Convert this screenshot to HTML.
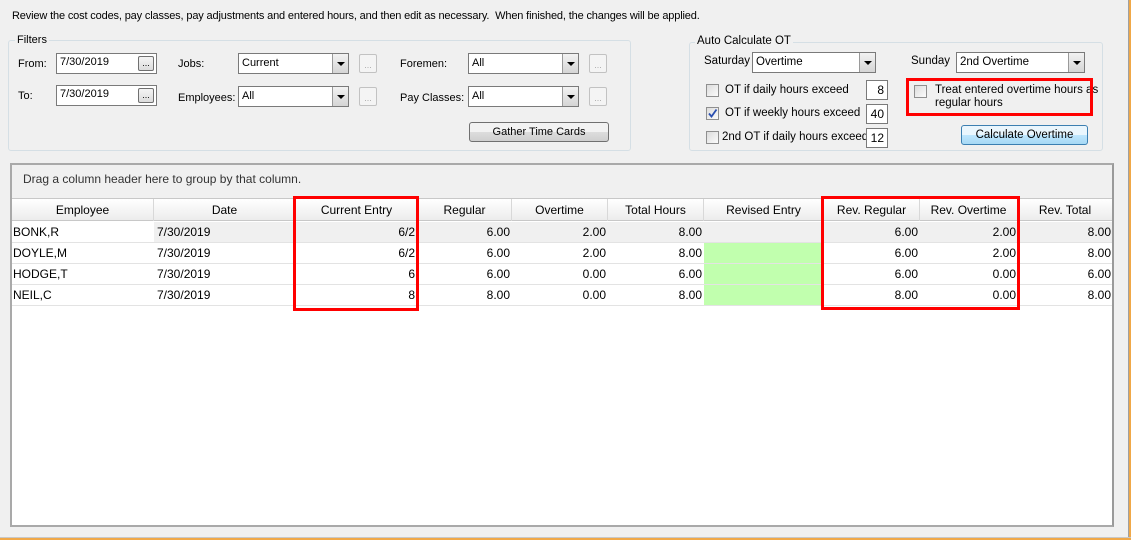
<!DOCTYPE html>
<html><head><meta charset="utf-8">
<style>
*{box-sizing:border-box;margin:0;padding:0}
body{width:1131px;height:540px;background:#f0f0f0;position:relative;overflow:hidden;font-family:"Liberation Sans",Arial,sans-serif;font-size:11px;color:#000}
.a{position:absolute;white-space:nowrap}
.fs{position:absolute;border:1px solid #d5dfe5;border-radius:3px}
.lg{position:absolute;background:#f0f0f0;padding:0 2px}
.tb{position:absolute;background:#fff;border:1px solid #7a7a7a;padding:2px 0 0 3px}
.cb{position:absolute;background:#fff;border:1px solid #7a7a7a;padding:3px 0 0 3px}
.dd{position:absolute;top:0;right:0;width:16px;height:100%;background:linear-gradient(#f2f2f2,#d5d5d5);border-left:1px solid #9a9a9a}
.dd:after{content:"";position:absolute;left:4px;top:8px;border-left:4px solid transparent;border-right:4px solid transparent;border-top:4px solid #000}
.db{position:absolute;width:18px;height:19px;border:1px solid #c2c2c2;border-radius:2px;background:#f4f4f4;color:#aaa;font-size:9px;text-align:center;line-height:20px}
.eb{position:absolute;width:16px;height:15px;border:1px solid #707070;border-radius:2px;background:linear-gradient(#f4f4f4,#dcdcdc);font-size:9px;text-align:center;line-height:13px}
.btn{position:absolute;border:1px solid #707070;border-radius:3px;background:linear-gradient(#f2f2f2 50%,#dddddd 50%,#cfcfcf);text-align:center;font-size:11px}
.chk{position:absolute;width:13px;height:13px;border:1px solid #8f8f8f;background:linear-gradient(135deg,#dcdcdc,#fbfbfb)}
.nb{position:absolute;background:#fff;border:1px solid #7a7a7a;text-align:right;padding:2px 3px 0 0;font-size:12px}
.g{font-family:"Liberation Sans",Arial,sans-serif;font-size:12px}
.o{font-size:11.5px}
.h{position:absolute;top:199px;height:22px;border-right:1px solid #d8d8d8;text-align:center;line-height:22px}
.c{position:absolute;height:21px;line-height:21px;border-bottom:1px solid #e3e3e3;padding:0 2px}
.r{text-align:right}
.red{position:absolute;border:3px solid #f00}
</style></head><body>
<div class="a" style="left:12px;top:10px;letter-spacing:-0.15px">Review the cost codes, pay classes, pay adjustments and entered hours, and then edit as necessary.&nbsp; When finished, the changes will be applied.</div>

<div class="fs" style="left:8px;top:40px;width:623px;height:111px"></div>
<div class="lg a" style="left:15px;top:34px">Filters</div>
<div class="a" style="left:18px;top:58px">From:</div>
<div class="tb" style="left:56px;top:53px;width:101px;height:21px">7/30/2019</div>
<div class="eb" style="left:138px;top:56px">...</div>
<div class="a" style="left:18px;top:90px">To:</div>
<div class="tb" style="left:56px;top:85px;width:101px;height:21px">7/30/2019</div>
<div class="eb" style="left:138px;top:88px">...</div>

<div class="a" style="left:178px;top:58px">Jobs:</div>
<div class="cb" style="left:238px;top:53px;width:111px;height:21px">Current<div class="dd"></div></div>
<div class="db" style="left:359px;top:54px">...</div>
<div class="a" style="left:178px;top:92px">Employees:</div>
<div class="cb" style="left:238px;top:86px;width:111px;height:21px">All<div class="dd"></div></div>
<div class="db" style="left:359px;top:87px">...</div>

<div class="a" style="left:400px;top:58px">Foremen:</div>
<div class="cb" style="left:468px;top:53px;width:111px;height:21px">All<div class="dd"></div></div>
<div class="db" style="left:589px;top:54px">...</div>
<div class="a" style="left:400px;top:92px">Pay Classes:</div>
<div class="cb" style="left:468px;top:86px;width:111px;height:21px">All<div class="dd"></div></div>
<div class="db" style="left:589px;top:87px">...</div>
<div class="btn" style="left:469px;top:122px;width:140px;height:20px;line-height:18px">Gather Time Cards</div>

<div class="fs" style="left:689px;top:42px;width:414px;height:109px"></div>
<div class="lg a g o" style="left:695px;top:35px">Auto Calculate OT</div>
<div class="a g o" style="left:704px;top:55px">Saturday</div>
<div class="cb g o" style="left:752px;top:52px;width:124px;height:21px">Overtime<div class="dd"></div></div>
<div class="a g o" style="left:911px;top:55px">Sunday</div>
<div class="cb g o" style="left:956px;top:52px;width:129px;height:21px">2nd Overtime<div class="dd"></div></div>

<div class="chk" style="left:706px;top:84px"></div>
<div class="a g o" style="left:725px;top:84px">OT if daily hours exceed</div>
<div class="nb" style="left:866px;top:80px;width:22px;height:20px">8</div>
<div class="chk" style="left:706px;top:107px"><svg width="11" height="11" style="position:absolute;left:0;top:0"><path d="M2 5.5 L4.5 8.5 L9.5 1.5" stroke="#2a4fb0" stroke-width="1.8" fill="none"/></svg></div>
<div class="a g o" style="left:725px;top:107px">OT if weekly hours exceed</div>
<div class="nb" style="left:866px;top:104px;width:22px;height:20px">40</div>
<div class="chk" style="left:706px;top:131px"></div>
<div class="a g o" style="left:722px;top:131px">2nd OT if daily hours exceed</div>
<div class="nb" style="left:866px;top:128px;width:22px;height:20px">12</div>

<div class="chk" style="left:914px;top:85px"></div>
<div class="a g o" style="left:935px;top:84px;line-height:13px">Treat entered overtime hours as<br>regular hours</div>
<div class="red" style="left:906px;top:78px;width:187px;height:38px"></div>
<div class="btn g o" style="left:961px;top:125px;width:127px;height:20px;line-height:18px;border-color:#3c7fb1;background:linear-gradient(#eaf6fd 50%,#bee6fd 50%,#a7d9f5)">Calculate Overtime</div>

<div style="position:absolute;left:10px;top:163px;width:1104px;height:364px;border:2px solid #a9a9a9;border-right-color:#9a9a9a;background:#fff"></div>
<div style="position:absolute;left:12px;top:165px;width:1100px;height:34px;background:#f0f0f0;border-bottom:1px solid #c8c8c8"></div>
<div class="a g" style="left:23px;top:172px;color:#333;font-size:12px">Drag a column header here to group by that column.</div>
<div style="position:absolute;left:12px;top:199px;width:1100px;height:22px;background:linear-gradient(#fff,#ececec);border-bottom:1px solid #c8c8c8"></div>
<div class="g">
<div class="h" style="left:12px;width:142px">Employee</div>
<div class="h" style="left:154px;width:142px">Date</div>
<div class="h" style="left:296px;width:122px">Current Entry</div>
<div class="h" style="left:418px;width:94px">Regular</div>
<div class="h" style="left:512px;width:96px">Overtime</div>
<div class="h" style="left:608px;width:96px">Total Hours</div>
<div class="h" style="left:704px;width:120px">Revised Entry</div>
<div class="h" style="left:824px;width:96px">Rev. Regular</div>
<div class="h" style="left:920px;width:98px">Rev. Overtime</div>
<div class="h" style="left:1018px;width:94px;border-right:none">Rev. Total</div>
</div>
<div style="position:absolute;left:154px;top:222px;width:958px;height:21px;background:#f0f0f0"></div>
<div style="position:absolute;left:704px;top:243px;width:120px;height:63px;background:#c1ffae"></div>

<div class="g">
<div class="c" style="left:12px;top:222px;width:1100px"></div>
<div class="c" style="left:12px;top:243px;width:1100px"></div>
<div class="c" style="left:12px;top:264px;width:1100px"></div>
<div class="c" style="left:12px;top:285px;width:1100px"></div>

<div class="a" style="left:13px;top:225px">BONK,R</div>
<div class="a" style="left:13px;top:246px">DOYLE,M</div>
<div class="a" style="left:13px;top:267px">HODGE,T</div>
<div class="a" style="left:13px;top:288px">NEIL,C</div>
<div class="a" style="left:157px;top:225px">7/30/2019</div>
<div class="a" style="left:157px;top:246px">7/30/2019</div>
<div class="a" style="left:157px;top:267px">7/30/2019</div>
<div class="a" style="left:157px;top:288px">7/30/2019</div>

<div class="a r" style="right:716px;top:225px">6/2</div>
<div class="a r" style="right:716px;top:246px">6/2</div>
<div class="a r" style="right:716px;top:267px">6</div>
<div class="a r" style="right:716px;top:288px">8</div>
<div class="a" style="right:621px;top:225px">6.00</div>
<div class="a" style="right:621px;top:246px">6.00</div>
<div class="a" style="right:621px;top:267px">6.00</div>
<div class="a" style="right:621px;top:288px">8.00</div>
<div class="a" style="right:525px;top:225px">2.00</div>
<div class="a" style="right:525px;top:246px">2.00</div>
<div class="a" style="right:525px;top:267px">0.00</div>
<div class="a" style="right:525px;top:288px">0.00</div>
<div class="a" style="right:429px;top:225px">8.00</div>
<div class="a" style="right:429px;top:246px">8.00</div>
<div class="a" style="right:429px;top:267px">6.00</div>
<div class="a" style="right:429px;top:288px">8.00</div>
<div class="a" style="right:213px;top:225px">6.00</div>
<div class="a" style="right:213px;top:246px">6.00</div>
<div class="a" style="right:213px;top:267px">6.00</div>
<div class="a" style="right:213px;top:288px">8.00</div>
<div class="a" style="right:115px;top:225px">2.00</div>
<div class="a" style="right:115px;top:246px">2.00</div>
<div class="a" style="right:115px;top:267px">0.00</div>
<div class="a" style="right:115px;top:288px">0.00</div>
<div class="a" style="right:20px;top:225px">8.00</div>
<div class="a" style="right:20px;top:246px">8.00</div>
<div class="a" style="right:20px;top:267px">6.00</div>
<div class="a" style="right:20px;top:288px">8.00</div>
</div>

<div class="red" style="left:293px;top:196px;width:126px;height:115px"></div>
<div class="red" style="left:821px;top:196px;width:199px;height:114px"></div>

<div style="position:absolute;left:1128px;top:0;width:1px;height:540px;background:#a0a0a0"></div>
<div style="position:absolute;left:1129px;top:0;width:2px;height:540px;background:#f0a848"></div>
<div style="position:absolute;left:0;top:537px;width:1131px;height:1px;background:#c8c8c8"></div>
<div style="position:absolute;left:0;top:538px;width:1131px;height:2px;background:#f0a848"></div>
</body></html>
